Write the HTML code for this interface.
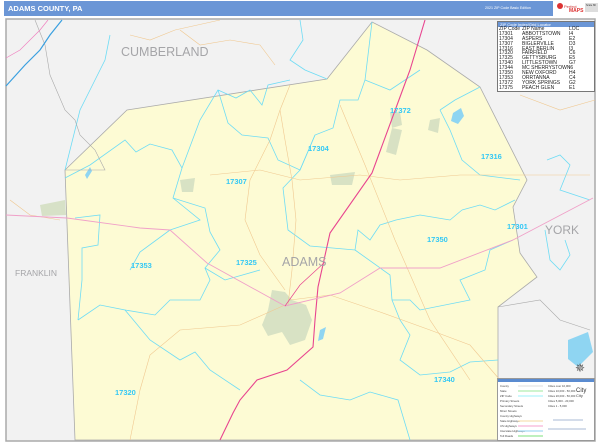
<!DOCTYPE html>
<html><head><meta charset="utf-8"><style>
html,body{margin:0;padding:0;background:#fff;width:600px;height:442px;overflow:hidden;font-family:"Liberation Sans",sans-serif}
.hdr{position:absolute;left:4px;top:1px;width:549px;height:15px;background:#6b96d6}
.hdr b{position:absolute;left:4px;top:3px;color:#fff;font-size:7.5px}
.hdr span{position:absolute;left:481px;top:5px;color:#fff;font-size:3.6px}
.logo{position:absolute;left:555px;top:1px;width:44px;height:15px}
.idx{position:absolute;left:497px;top:21px;width:96px;height:69px;background:#fff;border:1px solid #777;font-size:5px;color:#222;overflow:hidden}
.idx .t{background:#6b96d6;color:#fff;height:5px;font-size:4px;line-height:5px;padding-left:2px}
.idx .r{position:relative;height:4.9px;line-height:4.9px;white-space:nowrap}
.idx .r span{position:absolute;top:0}
.leg{position:absolute;left:497px;top:378px;width:96px;height:61px;background:#fff;border:1px solid #999;font-size:3px;color:#444}
.leg .t{background:#5a8bd0;height:3px}
</style></head><body>
<div class="hdr"><b>ADAMS COUNTY, PA</b><span>2021 ZIP Code Basic Edition</span></div>
<div class="logo"><svg width="44" height="15"><circle cx="5" cy="5" r="3" fill="#d33"/><text x="9" y="7" font-size="4" fill="#c33" font-family="Liberation Sans">Perfect</text><text x="14" y="11" font-size="5" font-weight="bold" fill="#d33" font-family="Liberation Sans">MAPS</text><rect x="30" y="2" width="13" height="9" fill="#ddd"/><text x="31" y="5" font-size="2.5" fill="#333" font-family="Liberation Sans">Scale 8K</text></svg></div>
<svg style="position:absolute;left:0;top:0" width="600" height="442">
<rect x="6" y="19" width="589" height="422" fill="#f2f2f2" stroke="#aaa" stroke-width="1.5"/>
<path d="M65,170 L127,110 L327,79 L372,22 L427,50 L480,87 L527,180 L513,207 L520,253 L537,277 L498,307 L498,440 L75,440 Z" fill="#fdfbd4" stroke="#aaa" stroke-width="0.8"/>
<g fill="#d4dfc2" opacity="0.9">
<path d="M272,290 L285,292 L292,300 L306,305 L312,320 L305,340 L290,345 L282,332 L268,336 L262,325 L268,310 Z"/>
<path d="M390,113 L400,112 L402,125 L392,128 Z"/>
<path d="M392,128 L402,130 L396,155 L386,152 Z"/>
<path d="M330,175 L355,172 L352,185 L332,185 Z"/>
<path d="M180,180 L195,178 L193,192 L182,192 Z"/>
<path d="M40,205 L65,200 L66,215 L42,216 Z"/>
<path d="M430,120 L440,118 L438,133 L428,130 Z"/>
</g>
<g fill="#8fd5f2"><path d="M453,113 l8,-5 l3,8 l-6,8 l-7,-3 z"/><path d="M568,340 l20,-8 l5,20 l-15,15 l-10,-8 z"/><path d="M85,175 l5,-8 l2,4 l-5,8 z"/><path d="M320,330 l6,-3 l-3,12 l-5,2 z"/></g>
<g fill="none" stroke="#6edcf5" stroke-width="0.8">
<path d="M300,20 L303,40 L290,60 L305,70 L327,79"/>
<path d="M110,35 L105,60 L95,80 L80,110 L65,170"/>
<path d="M65,178 L90,165 L125,140 L136,152 L150,144 L172,150 L182,168 L173,198 L200,220 L170,230"/>
<path d="M75,218 L100,215 L98,245 L82,248 L82,280 L78,320"/>
<path d="M182,168 L200,120 L218,90 L236,98 L250,90 L262,105 L268,85 L290,80"/>
<path d="M218,90 L228,123 L242,135 L268,138 L278,160 L300,170 L315,135 L333,128 L340,100 L358,100 L365,80"/>
<path d="M173,198 L205,208 L210,232 L220,250 L205,268 L225,280 L260,270"/>
<path d="M125,310 L155,315 L170,300 L200,300 L210,280 L205,268"/>
<path d="M78,320 L100,305 L125,310 L150,340 L180,360 L195,352 L210,370 L240,390"/>
<path d="M315,135 L300,170 L283,188 L288,230 L310,246 L355,250 L358,230 L370,240 L380,225 L396,220 L420,215 L450,220 L462,210"/>
<path d="M355,250 L390,275 L392,300 L410,300 L420,310 L470,300 L460,280 L485,270 L490,250 L513,240"/>
<path d="M392,300 L400,320 L410,335 L400,360 L420,375 L450,372 L470,362 L498,360"/>
<path d="M440,110 L455,100 L480,87 M440,110 L450,130 L462,160 L480,175 L520,180"/>
<path d="M462,210 L480,205 L495,210 L515,200"/>
<path d="M300,380 L320,395 L350,400 L370,392 L398,400 L410,440"/>
<path d="M365,80 L372,22 M365,80 L390,90 L420,70"/>
<path d="M170,230 L140,252 L130,270"/>
<path d="M547,160 L560,155 L570,165 L560,190 L575,195 L590,200 M545,230 L550,260 L560,270 L570,255 L565,240"/>
<path d="M515,90 L540,80 L560,75 L580,80"/>
</g>
<g fill="none" stroke="#f0c890" stroke-width="0.6">
<path d="M130,35 L150,40 L175,30 L220,20"/><path d="M285,290 L260,255 L245,220 L250,180 L270,140 L280,110 L290,85"/>
<path d="M290,300 L330,295 L380,312 L430,330 L470,345 L500,380"/>
<path d="M285,305 L240,325 L180,330 L150,355 L140,390 L130,440"/>
<path d="M288,305 L292,270 L296,220 L292,180 L285,140 L280,110"/>
<path d="M340,105 L365,165 L395,240 L430,320 L470,380"/>
<path d="M210,175 L260,170 L300,180 L360,175 L400,180 L460,175 L520,175 L590,175"/>
<path d="M10,200 L30,215 L60,220"/><path d="M520,95 L560,110 L595,100"/>
<path d="M180,30 L200,45 L230,40 L260,45 L275,65"/>
</g>
<g fill="none" stroke="#aaa" stroke-width="0.6"><path d="M35,20 L45,45 L50,75 L65,110 L75,120 L80,135 L95,150 L105,170 L65,170"/><path d="M498,307 L540,300 L560,320 L590,330"/></g>
<path d="M6,86 L25,65 L40,50 L50,35 L62,20" fill="none" stroke="#3aa0e0" stroke-width="1.2"/>
<path d="M6,58 L20,50 L40,30 L48,20" fill="none" stroke="#f080c0" stroke-width="0.7"/>
<g fill="none" stroke="#e8458f" stroke-width="1.1">
<path d="M425,20 L410,70 L400,97 L372,173 L330,233 L318,287 L315,320 L313,347 L287,370 L257,380 L240,400 L233,413 L220,440"/>
<path d="M6,215 L67,218 L140,228 L170,230 L207,263 L285,306 L340,293 L380,268 L440,268 L513,240 L593,198" stroke="#f0a0c8" stroke-width="0.9"/>
<path d="M285,306 L300,285 L325,262" stroke-width="0.7"/>
</g>
<g font-family="Liberation Sans" font-weight="bold" font-size="7.5" fill="#33c8f5">
<text x="390" y="113">17372</text><text x="308" y="151">17304</text><text x="481" y="159">17316</text>
<text x="226" y="184">17307</text><text x="427" y="242">17350</text><text x="507" y="229">17301</text>
<text x="131" y="268">17353</text><text x="236" y="265">17325</text><text x="115" y="395">17320</text><text x="434" y="382">17340</text>
</g>
<g font-family="Liberation Sans" fill="#a5a5a8">
<text x="121" y="56" font-size="12.5">CUMBERLAND</text>
<text x="15" y="276" font-size="8.5">FRANKLIN</text>
<text x="545" y="234" font-size="12">YORK</text>
<text x="282" y="266" font-size="12.5">ADAMS</text>
</g>
<text x="575" y="372" font-size="12" fill="#555">✵</text>
</svg>
<div class="idx"><div class="t">ZIP Code Index/Grid Locator</div>
<div class="r"><span style="left:1px">ZIP Code</span><span style="left:24px">ZIP Name</span><span style="left:71px">LOC</span></div>
<div class="r"><span style="left:1px">17301</span><span style="left:24px">ABBOTTSTOWN</span><span style="left:71px">I4</span></div>
<div class="r"><span style="left:1px">17304</span><span style="left:24px">ASPERS</span><span style="left:71px">E2</span></div>
<div class="r"><span style="left:1px">17307</span><span style="left:24px">BIGLERVILLE</span><span style="left:71px">D3</span></div>
<div class="r"><span style="left:1px">17316</span><span style="left:24px">EAST BERLIN</span><span style="left:71px">I3</span></div>
<div class="r"><span style="left:1px">17320</span><span style="left:24px">FAIRFIELD</span><span style="left:71px">C6</span></div>
<div class="r"><span style="left:1px">17325</span><span style="left:24px">GETTYSBURG</span><span style="left:71px">E5</span></div>
<div class="r"><span style="left:1px">17340</span><span style="left:24px">LITTLESTOWN</span><span style="left:71px">G7</span></div>
<div class="r"><span style="left:1px">17344</span><span style="left:24px">MC SHERRYSTOWN</span><span style="left:71px">I6</span></div>
<div class="r"><span style="left:1px">17350</span><span style="left:24px">NEW OXFORD</span><span style="left:71px">H4</span></div>
<div class="r"><span style="left:1px">17353</span><span style="left:24px">ORRTANNA</span><span style="left:71px">C4</span></div>
<div class="r"><span style="left:1px">17372</span><span style="left:24px">YORK SPRINGS</span><span style="left:71px">G2</span></div>
<div class="r"><span style="left:1px">17375</span><span style="left:24px">PEACH GLEN</span><span style="left:71px">E1</span></div>
</div>
<div class="leg"><div class="t"></div>
<svg width="96" height="58" style="position:absolute;left:0;top:3px">
<g font-family="Liberation Sans" font-size="2.8" fill="#444">
<text x="2" y="5">County</text><text x="2" y="10">State</text><text x="2" y="15">ZIP Code</text><text x="2" y="20">Primary Streets</text><text x="2" y="25">Secondary Streets</text><text x="2" y="30">Minor Streets</text><text x="2" y="35">County Highways</text><text x="2" y="40">State Highways</text><text x="2" y="45">US Highways</text><text x="2" y="50">Interstate Highways</text><text x="2" y="55">Toll Roads</text>
<text x="50" y="5">Cities over 10,000</text><text x="50" y="10">Cities 10,000 - 50,000</text><text x="50" y="15">Cities 20,000 - 50,000</text><text x="50" y="20">Cities 5,000 - 20,000</text><text x="50" y="25">Cities 1 - 5,000</text>
<text x="78" y="10" font-size="6" fill="#333">City</text><text x="78" y="15" font-size="4">City</text>
</g>
<g stroke-width="1"><line x1="20" y1="9" x2="45" y2="9" stroke="#9ee89e"/><line x1="20" y1="14" x2="45" y2="14" stroke="#9ef0f8"/><line x1="20" y1="39" x2="45" y2="39" stroke="#f5d9a0"/><line x1="20" y1="44" x2="45" y2="44" stroke="#f5a0cc"/><line x1="20" y1="49" x2="45" y2="49" stroke="#8fd0f0"/><line x1="20" y1="54" x2="45" y2="54" stroke="#7ce07c"/><line x1="20" y1="4" x2="45" y2="4" stroke="#ddd"/></g>
<line x1="55" y1="38" x2="85" y2="38" stroke="#5577aa" stroke-width="0.5"/><line x1="50" y1="47" x2="88" y2="47" stroke="#5577aa" stroke-width="0.5"/>
</svg></div>
</body></html>
